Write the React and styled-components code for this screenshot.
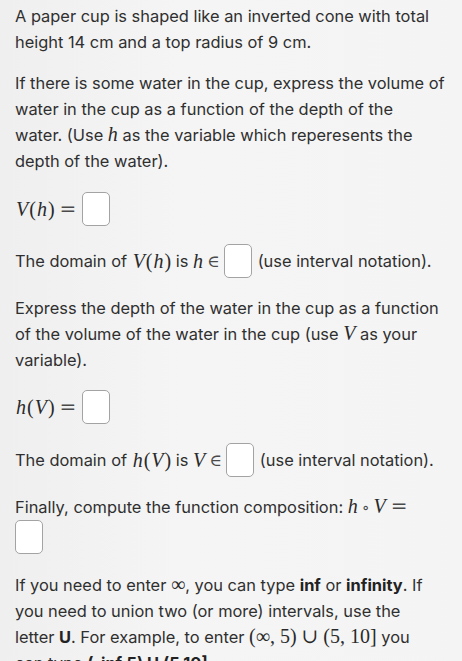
import React from 'react';
import styled, { createGlobalStyle } from 'styled-components';

const GlobalStyle = createGlobalStyle`
  html, body {
    margin: 0;
    padding: 0;
    background: #f3f3f3;
  }
`;

const Page = styled.div`
  padding: 3px 10px 0 15px;
  font-family: Inter, "Noto Sans", sans-serif;
  font-size: 16.4px;
  line-height: 26px;
  color: #2f2f2f;
  background: linear-gradient(90deg, #efefef 0%, #f5f5f5 40%, #f4f4f4 100%);
  min-height: 661px;
  box-sizing: border-box;
`;

const Para = styled.p`
  margin: 0 0 ${(p) => (p.gap === undefined ? 18 : p.gap)}px 0;
`;

const Row = styled.div`
  display: flex;
  align-items: center;
  flex-wrap: wrap;
  height: 34px;
  margin: 0 0 ${(p) => (p.gap === undefined ? 18 : p.gap)}px 0;
`;

const M = styled.span`
  font-family: "Liberation Serif", "DejaVu Serif", serif;
  font-style: ${(p) => (p.upright ? 'normal' : 'italic')};
  font-size: 20px;
  line-height: 20px;
  color: #2a2a2a;
  padding: 0 ${(p) => p.pad || 0}px;
`;

const Op = styled.span`
  font-family: "DejaVu Serif", "Liberation Serif", serif;
  font-size: ${(p) => p.size || 20}px;
  line-height: 20px;
  color: #4a4a4a;
  padding: 0 ${(p) => (p.pad === undefined ? 5 : p.pad)}px;
`;

const AnswerBox = styled.span`
  display: inline-block;
  width: 26px;
  height: 32px;
  background: #fff;
  border: 1px solid #a3a3a3;
  border-radius: 5px;
  margin: 0 ${(p) => p.right || 0}px 0 ${(p) => p.left || 0}px;
`;

const Strong = styled.b`
  font-weight: 700;
  color: #222;
`;

const Fn = ({ f, x }) => (
  <>
    <M pad={1}>{f}</M>
    <M upright>(</M>
    <M pad={1}>{x}</M>
    <M upright>)</M>
  </>
);

export default function App() {
  return (
    <>
      <GlobalStyle />
      <Page>
        <Para gap={15}>
          A paper cup is shaped like an inverted cone with total
          <br />
          height 14 cm and a top radius of 9 cm.
        </Para>
        <Para>
          If there is some water in the cup, express the volume of
          <br />
          water in the cup as a function of the depth of the
          <br />
          water. (Use <M>h</M> as the variable which reperesents the
          <br />
          depth of the water).
        </Para>
        <Row>
          <Fn f="V" x="h" />
          <Op pad={5}>=</Op>
          <AnswerBox left={1} />
        </Row>
        <Row gap={17}>
          <span>The domain of&nbsp;</span>
          <Fn f="V" x="h" />
          <span>&nbsp;is&nbsp;</span>
          <M>h</M>
          <Op pad={4} size={17}>∈</Op>
          <AnswerBox right={6} />
          <span>(use interval notation).</span>
        </Row>
        <Para gap={17}>
          Express the depth of the water in the cup as a function
          <br />
          of the volume of the water in the cup (use <M>V</M> as your
          <br />
          variable).
        </Para>
        <Row gap={19}>
          <Fn f="h" x="V" />
          <Op pad={5}>=</Op>
          <AnswerBox left={1} />
        </Row>
        <Row gap={17}>
          <span>The domain of&nbsp;</span>
          <Fn f="h" x="V" />
          <span>&nbsp;is&nbsp;</span>
          <M>V</M>
          <Op pad={4} size={17}>∈</Op>
          <AnswerBox right={6} />
          <span>(use interval notation).</span>
        </Row>
        <Para gap={0}>
          Finally, compute the function composition: <M>h</M>
          <Op pad={4} size={16}>∘</Op>
          <M>V</M>
          <Op pad={5}>=</Op>
        </Para>
        <Row>
          <AnswerBox />
        </Row>
        <Para>
          If you need to enter <M upright>∞</M>, you can type <Strong>inf</Strong> or <Strong>infinity</Strong>. If
          <br />
          you need to union two (or more) intervals, use the
          <br />
          letter <Strong>U</Strong>. For example, to enter <M upright>(∞, 5) ∪ (5, 10]</M> you
          <br />
          can type <Strong>(-inf,5) U (5,10]</Strong>
        </Para>
      </Page>
    </>
  );
}
